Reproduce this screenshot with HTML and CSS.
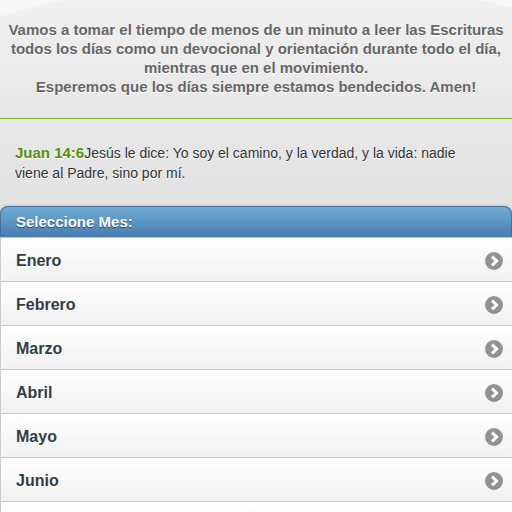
FILE: index.html
```
<!DOCTYPE html>
<html lang="es">
<head>
<meta charset="utf-8">
<meta name="viewport" content="width=device-width, initial-scale=1">
<title>Devocional</title>
<link rel="stylesheet" href="styles.css">
</head>
<body>
<svg class="defs" aria-hidden="true">
  <symbol id="arrow" viewBox="0 0 18 18">
    <circle cx="9" cy="9" r="9" fill="#929292"/>
    <path d="M7 4.6 11.6 9 7 13.4" fill="none" stroke="#fff" stroke-width="3"/>
  </symbol>
</svg>
<header class="intro">
  <p>Vamos a tomar el tiempo de menos de un minuto a leer las Escrituras todos los días como un devocional y orientación durante todo el día, mientras que en el movimiento.<br>Esperemos que los días siempre estamos bendecidos. Amen!</p>
</header>
<main>
  <p class="verse"><strong>Juan 14:6</strong>Jesús le dice: Yo soy el camino, y la verdad, y la vida: nadie viene al Padre, sino por mí.</p>
  <section class="months">
    <h2>Seleccione Mes:</h2>
    <ul>
      <li><a href="#enero">Enero<svg class="icon"><use href="#arrow"/></svg></a></li>
      <li><a href="#febrero">Febrero<svg class="icon"><use href="#arrow"/></svg></a></li>
      <li><a href="#marzo">Marzo<svg class="icon"><use href="#arrow"/></svg></a></li>
      <li><a href="#abril">Abril<svg class="icon"><use href="#arrow"/></svg></a></li>
      <li><a href="#mayo">Mayo<svg class="icon"><use href="#arrow"/></svg></a></li>
      <li><a href="#junio">Junio<svg class="icon"><use href="#arrow"/></svg></a></li>
      <li><a href="#julio">Julio<svg class="icon"><use href="#arrow"/></svg></a></li>
    </ul>
  </section>
</main>
</body>
</html>
```
FILE: styles.css
```
* {
  box-sizing: border-box;
}

body {
  margin: 0;
  height: 100vh;
  overflow: hidden;
  background: #e4e4e4;
  color: #333;
  font-family: "Liberation Sans", Arial, sans-serif;
  font-size: 15px;
}

.defs {
  display: none;
}

.intro {
  padding: 20px 4px 22px;
  border-bottom: 1px solid #6fb41c;
  background:
    radial-gradient(ellipse 400px 139px at 53% 118px, #f6f6f600 99%, #f7f7f7 100%),
    linear-gradient(#f0f0f0, #e7e7e7);
  color: #666;
  font-weight: bold;
  line-height: 19px;
  text-align: center;
  text-shadow: 0 1px 0 #fff;
}

.intro p {
  margin: 0;
}

main {
  background: linear-gradient(#e8e8e8, #e2e2e2 90px);
}

.verse {
  margin: 0;
  padding: 24px 24px 23px 15px;
  font-size: 14px;
  line-height: 20px;
  text-shadow: 0 1px 0 #fff;
}

.verse strong {
  color: #598f09;
  font-size: 15px;
}

.months h2 {
  margin: 0;
  padding: 0 15px;
  border: 1px solid #456f9a;
  border-bottom: 0;
  border-radius: 8px 8px 0 0;
  background: linear-gradient(#6facd5, #497bae);
  box-shadow: 0 1px 4px #0004;
  color: #fff;
  font-size: 15px;
  line-height: 30px;
  text-shadow: 0 1px 1px #254f7a;
}

.months ul {
  position: relative;
  margin: 0;
  padding: 0;
  border-left: 1px solid #ccc;
  list-style: none;
}

.months a {
  display: flex;
  align-items: center;
  justify-content: space-between;
  height: 44px;
  padding: 2px 9px 0 15px;
  border-top: 1px solid #c8c8c8;
  background: linear-gradient(#fff, #f1f1f1);
  color: #2f3e46;
  font-size: 16px;
  font-weight: bold;
  line-height: 16px;
  text-decoration: none;
  text-shadow: 0 1px 0 #fff;
}

.icon {
  width: 18px;
  height: 18px;
}
```
